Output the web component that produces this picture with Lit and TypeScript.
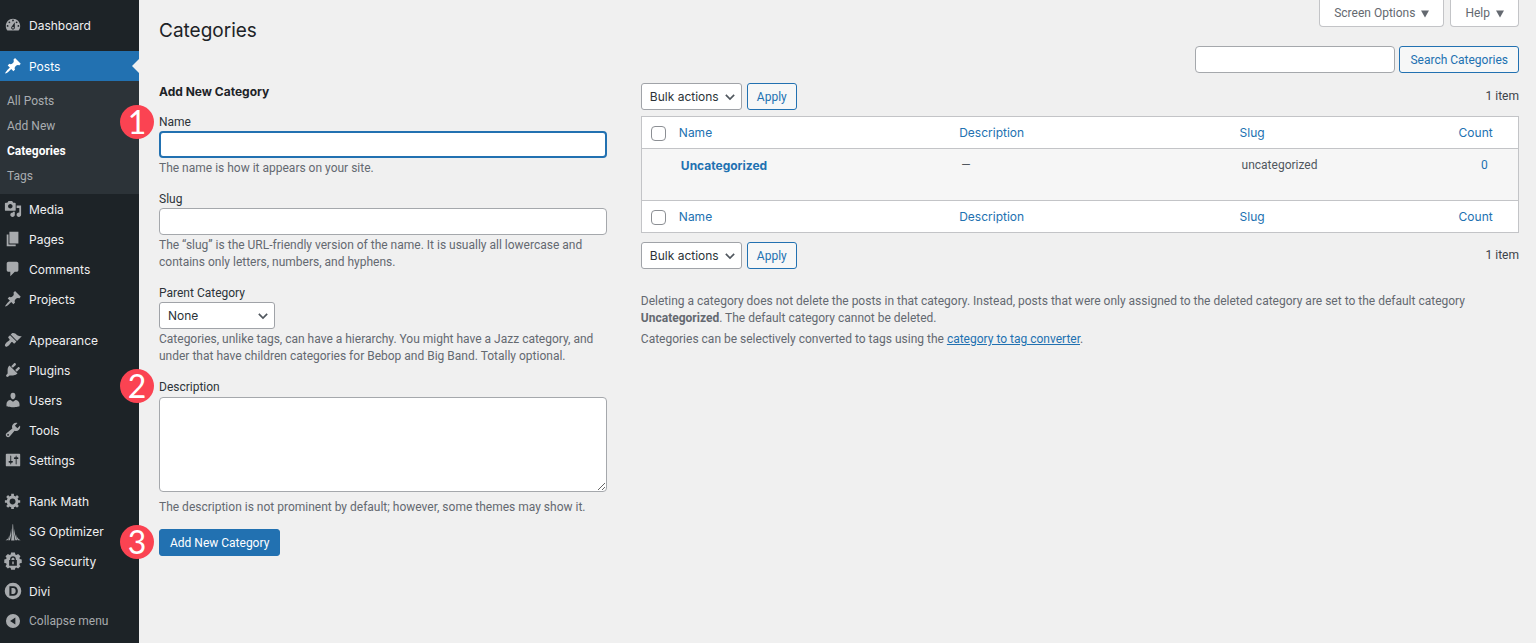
import { LitElement, html, svg, css, nothing, type TemplateResult } from "lit";
import { customElement, property } from "lit/decorators.js";
import { classMap } from "lit/directives/class-map.js";

const pin = svg`<path d="M10.44 3.02l1.82-1.82 6.36 6.35-1.83 1.82c-1.05-.68-2.48-.57-3.41.36l-.75.75c-.92.93-1.04 2.35-.35 3.41l-1.83 1.82-2.41-2.41-2.8 2.79c-.42.42-3.38 2.71-3.8 2.29s1.86-3.39 2.28-3.81l2.79-2.79L4.1 9.36l1.83-1.82c1.05.69 2.48.57 3.4-.36l.75-.75c.93-.92 1.05-2.35.36-3.41z"/>`;

const icons: Record<string, TemplateResult> = {
  dashboard: svg`<path fill-rule="evenodd" d="M3.76 16h12.48c1.1-1.37 1.76-3.11 1.76-5 0-4.42-3.58-8-8-8s-8 3.58-8 8c0 1.89.66 3.63 1.76 5zM10 4c.55 0 1 .45 1 1s-.45 1-1 1-1-.45-1-1 .45-1 1-1zM6 6c.55 0 1 .45 1 1s-.45 1-1 1-1-.45-1-1 .45-1 1-1zm8 0c.55 0 1 .45 1 1s-.45 1-1 1-1-.45-1-1 .45-1 1-1zm-5.37 5.55L12 7v6c0 1.1-.9 2-2 2s-2-.9-2-2c0-.57.24-1.08.63-1.45zM4 10c.55 0 1 .45 1 1s-.45 1-1 1-1-.45-1-1 .45-1 1-1zm12 0c.55 0 1 .45 1 1s-.45 1-1 1-1-.45-1-1 .45-1 1-1zm-5 3c0-.55-.45-1-1-1s-1 .45-1 1 .45 1 1 1 1-.45 1-1z"/>`,
  pin,
  media: svg`<path fill-rule="evenodd" d="M13 11V4c0-.55-.45-1-1-1h-1.67L9 1H5L3.67 3H2c-.55 0-1 .45-1 1v7c0 .55.45 1 1 1h10c.55 0 1-.45 1-1zM7 4.5c1.38 0 2.5 1.12 2.5 2.5S8.38 9.5 7 9.5 4.5 8.38 4.5 7 5.62 4.5 7 4.5zM14 6h5v10.5c0 1.38-1.12 2.5-2.5 2.5S14 17.88 14 16.5s1.12-2.5 2.5-2.5c.17 0 .34.02.5.05V9h-3V6zm-4 8.05V13h2v3.5c0 1.38-1.12 2.5-2.5 2.5S7 17.88 7 16.5 8.12 14 9.5 14c.17 0 .34.02.5.05z"/>`,
  pages: svg`<path d="M6 15V2h10v13H6zm-1 1h8v2H3V5h2v11z"/>`,
  comments: svg`<path d="M5 2h9c1.1 0 2 .9 2 2v7c0 1.1-.9 2-2 2h-2l-5 5v-5H5c-1.1 0-2-.9-2-2V4c0-1.1.9-2 2-2z"/>`,
  appearance: svg`<path d="M14.48 11.06L7.41 3.99l1.5-1.5c.5-.56 2.3-.47 3.51.32 1.21.8 1.43 1.28 2.91 2.1 1.18.64 2.45 1.26 4.45.85zm-.71.71L6.7 4.7 4.93 6.47c-.39.39-.39 1.02 0 1.41l1.06 1.06c.39.39.39 1.03 0 1.42-.6.6-1.43 1.11-2.21 1.69-.35.26-.7.53-1.01.84C1.43 14.23.4 16.08 1.4 17.07c.99 1 2.84-.03 4.18-1.36.31-.31.58-.66.85-1.02.57-.78 1.08-1.61 1.69-2.21.39-.39 1.02-.39 1.41 0l1.06 1.06c.39.39 1.02.39 1.41 0z"/>`,
  plugins: svg`<path d="M13.11 4.36L9.87 7.6 8 5.73l3.24-3.24c.35-.34 1.05-.2 1.56.32.52.51.66 1.21.31 1.55zm-8 1.77l.91-1.12 9.01 9.01-1.19.84c-.71.71-2.63 1.16-3.82 1.16H6.14L4.9 17.26c-.59.59-1.54.59-2.12 0-.59-.58-.59-1.53 0-2.12l1.24-1.24v-3.88c0-1.13.4-3.19 1.09-3.89zm7.26 3.97l3.24-3.24c.34-.35 1.04-.21 1.55.31.52.51.66 1.21.31 1.55l-3.24 3.25z"/>`,
  users: svg`<path d="M10 9.25c-2.27 0-2.73-3.44-2.73-3.44C7 4.02 7.82 2 9.97 2c2.16 0 2.98 2.02 2.71 3.81 0 0-.41 3.44-2.68 3.44zm0 2.57L12.72 10c2.39 0 4.52 2.33 4.52 4.53v2.49s-3.65 1.13-7.24 1.13c-3.65 0-7.24-1.13-7.24-1.13v-2.49c0-2.25 1.94-4.48 4.47-4.48z"/>`,
  tools: svg`<path fill-rule="evenodd" d="M16.68 9.77c-1.34 1.34-3.3 1.67-4.95.99l-5.41 6.52c-.99.99-2.59.99-3.58 0s-.99-2.59 0-3.57l6.52-5.42c-.68-1.65-.35-3.61.99-4.95 1.28-1.28 3.12-1.62 4.72-1.06l-2.89 2.89 2.82 2.82 2.86-2.87c.53 1.58.18 3.39-1.08 4.65zM3.81 16.21c.4.39 1.04.39 1.43 0 .4-.4.4-1.04 0-1.43-.39-.4-1.03-.4-1.43 0-.39.39-.39 1.03 0 1.43z"/>`,
  settings: svg`<path fill-rule="evenodd" d="M18 16V4c0-.55-.45-1-1-1H3c-.55 0-1 .45-1 1v12c0 .55.45 1 1 1h14c.55 0 1-.45 1-1zM8 11h1c.55 0 1 .45 1 1s-.45 1-1 1H8v1.5c0 .28-.22.5-.5.5s-.5-.22-.5-.5V13H6c-.55 0-1-.45-1-1s.45-1 1-1h1V5.5c0-.28.22-.5.5-.5s.5.22.5.5V11zm5-2h-1c-.55 0-1-.45-1-1s.45-1 1-1h1V5.500c0-.28.22-.5.5-.5s.5.22.5.5V7h1c.55 0 1 .45 1 1s-.45 1-1 1h-1v5.500c0 .28-.22.5-.5.5s-.5-.22-.5-.5V9z"/>`,
  gear: svg`<path fill-rule="evenodd" d="M18 12h-2.18c-.17.7-.44 1.35-.81 1.93l1.54 1.54-2.1 2.1-1.54-1.54c-.58.36-1.23.63-1.91.79V19H8v-2.18c-.68-.16-1.33-.43-1.91-.79l-1.54 1.54-2.12-2.12 1.54-1.54c-.36-.58-.63-1.23-.79-1.91H1V9.03h2.17c.16-.7.44-1.35.8-1.94L2.43 5.55l2.1-2.1 1.54 1.54c.58-.37 1.24-.64 1.93-.81V2h3v2.18c.68.16 1.33.43 1.91.79l1.54-1.54 2.12 2.12-1.54 1.54c.36.59.64 1.24.8 1.94H18V12zm-8.5 1.8c1.82 0 3.3-1.48 3.3-3.3s-1.48-3.3-3.3-3.3-3.3 1.48-3.3 3.3 1.48 3.3 3.3 3.3z"/>`,
  optimizer: svg`<path d="M9.500 2.500h.6l.7 11 .9 7H7.900l.9-7zM8 7l.2 6.500-1.600 6.800H4.600C6.500 17 7.500 12 8 7zM11.200 7.500l1.200 6.500 2.400 6.300h-2.200l-1.400-6.300zM6 13.500c-.3 3.200-1.400 5.500-4.300 6.900h2.200c1.300-1.700 2-3.900 2.100-6.900zM13.600 13.500c.7 3 2 5.500 4.900 6.900h-2.900c-1.400-1.700-1.900-4-2-6.900z"/>`,
  security: svg`<path fill-rule="evenodd" d="M7.900.6h4.200l.5 2.200 1.100.5 2-1.200 2.600 2.600-1.200 2 .5 1.100 2.100.5v3.800l-2.100.5-.5 1.200 1.200 2-2.600 2.600-2-1.200-1.100.5-.5 2.100H7.900l-.5-2.100-1.200-.5-1.900 1.200-2.600-2.600 1.200-2-.5-1.200L.3 12.100V8.300l2.100-.5.500-1.100-1.200-2 2.600-2.600 2 1.200 1.100-.5zM6.800 9H5.700v6.200h8.600V9h-1.100V8c0-1.800-1.400-3.200-3.200-3.200S6.800 6.200 6.800 8zm1.500 0V8c0-1 .7-1.700 1.700-1.700s1.700.7 1.700 1.700v1zM9.200 10.500h1.600v3.200H9.200z"/>`,
  divi: svg`<path fill-rule="evenodd" d="M10 .8a9.200 9.200 0 1 0 0 18.400A9.200 9.200 0 0 0 10 .8zM6 4.600h4.200c3.200 0 5.200 2.200 5.200 5.400s-2 5.400-5.200 5.400H6zm2.300 2.100v6.600h1.800c1.800 0 2.900-1.200 2.900-3.300s-1.100-3.300-2.900-3.300z"/>`,
  collapse: svg`<path fill-rule="evenodd" d="M10 2.200a7.800 7.800 0 1 0 0 15.600 7.800 7.800 0 0 0 0-15.600zM12.600 6v8L6.800 10z"/>`,
};

interface MenuEntry {
  label: string;
  icon: string;
  current?: boolean;
  children?: string[];
}

const menuGroups: MenuEntry[][] = [
  [{ label: "Dashboard", icon: "dashboard" }],
  [
    { label: "Posts", icon: "pin", current: true, children: ["All Posts", "Add New", "Categories", "Tags"] },
    { label: "Media", icon: "media" },
    { label: "Pages", icon: "pages" },
    { label: "Comments", icon: "comments" },
    { label: "Projects", icon: "pin" },
  ],
  [
    { label: "Appearance", icon: "appearance" },
    { label: "Plugins", icon: "plugins" },
    { label: "Users", icon: "users" },
    { label: "Tools", icon: "tools" },
    { label: "Settings", icon: "settings" },
  ],
  [
    { label: "Rank Math", icon: "gear" },
    { label: "SG Optimizer", icon: "optimizer" },
    { label: "SG Security", icon: "security" },
    { label: "Divi", icon: "divi" },
  ],
];

const glyph = (name: string) =>
  html`<svg class="icon" viewBox="0 0 20 20" aria-hidden="true">${icons[name]}</svg>`;

@customElement("admin-menu")
export class AdminMenu extends LitElement {
  static styles = css`
    :host {
      display: block;
      background: #1d2327;
      color: #f0f0f1;
      font-size: 12px;
    }
    .menu {
      display: flex;
      flex-direction: column;
      gap: 11px;
      padding-top: 10px;
    }
    ul {
      list-style: none;
      margin: 0;
      padding: 0;
    }
    .item {
      display: flex;
      align-items: center;
      gap: 7px;
      width: 100%;
      height: 30px;
      padding: 0 0 0 4px;
      border: 0;
      background: none;
      color: inherit;
      font: 12px/17px Inter, "Liberation Sans", sans-serif;
      text-align: left;
      text-decoration: none;
      position: relative;
      box-sizing: border-box;
      cursor: pointer;
    }
    .icon {
      width: 18px;
      height: 18px;
      fill: #a7aaad;
      overflow: visible;
    }
    .current {
      background: #2271b1;
      color: #fff;
    }
    .current .icon {
      fill: #fff;
    }
    .current::after {
      content: "";
      position: absolute;
      right: 0;
      top: 8px;
      border: 7px solid transparent;
      border-left-width: 0;
      border-right-color: #f0f0f0;
    }
    .submenu {
      background: #2c3338;
      padding: 8px 0 5px;
    }
    .sub {
      display: block;
      padding-left: 7px;
      line-height: 25px;
      color: #a9adb1;
      text-decoration: none;
    }
    .sub.active {
      color: #fff;
      font-weight: 700;
    }
    .collapse {
      color: #a7aaad;
      font-family: Roboto, "Liberation Sans", sans-serif;
    }
  `;

  render() {
    return html`<nav class="menu" aria-label="Main menu">
      ${menuGroups.map(
        (group, g) => html`<ul>
          ${group.map(
            (entry) => html`<li>
              <a class=${classMap({ item: true, current: !!entry.current })} href="#">
                ${glyph(entry.icon)}<span>${entry.label}</span>
              </a>
              ${entry.children
                ? html`<ul class="submenu">
                    ${entry.children.map(
                      (c) => html`<li><a class=${classMap({ sub: true, active: c === "Categories" })} href="#">${c}</a></li>`
                    )}
                  </ul>`
                : nothing}
            </li>`
          )}
          ${g === menuGroups.length - 1
            ? html`<li><button class="item collapse" type="button">${glyph("collapse")}<span>Collapse menu</span></button></li>`
            : nothing}
        </ul>`
      )}
    </nav>`;
  }
}

const controls = css`
  * {
    box-sizing: border-box;
  }
  h1,
  h2,
  p {
    margin: 0;
  }
  a {
    color: #2271b1;
    text-decoration: none;
  }
  .text {
    display: block;
    height: 27px;
    border: 1px solid #a5a8ac;
    border-radius: 4px;
    background: #fff;
    padding: 0 8px;
    font: inherit;
    color: #2c3338;
    outline: 0;
  }
  .button {
    height: 27px;
    padding: 2px 10px 0;
    border: 1px solid #2271b1;
    border-radius: 3px;
    background: #f6f7f7;
    color: #2271b1;
    font: inherit;
    cursor: pointer;
    white-space: nowrap;
  }
  .compact {
    padding: 2px 9px 0;
  }
  .primary {
    background: #2271b1;
    color: #fff;
  }
  .picker {
    position: relative;
    display: flex;
  }
  .picker select {
    appearance: none;
    width: 100%;
    height: 27px;
    padding: 0 22px 0 8px;
    border: 1px solid #a0a3a8;
    border-radius: 3px;
    background: #fff;
    color: #2c3338;
    font: 12px/17px Inter, "Liberation Sans", sans-serif;
  }
  .picker svg {
    position: absolute;
    right: 7px;
    top: 9px;
    width: 10px;
    height: 10px;
    fill: none;
    stroke: #50575e;
    stroke-width: 2;
    pointer-events: none;
  }
`;

const chevron = html`<svg viewBox="0 0 12 12" aria-hidden="true"><path d="M1 3.500l5 5 5-5" /></svg>`;

@customElement("category-form")
export class CategoryForm extends LitElement {
  static styles = [
    controls,
    css`
      :host {
        display: block;
        padding-top: 10px;
      }
      h2 {
        font: 700 12px/18px Inter, "Liberation Sans", sans-serif;
        color: #1d2327;
        margin-bottom: 13px;
      }
      form {
        display: flex;
        flex-direction: column;
        align-items: stretch;
        gap: 13px;
      }
      .field {
        position: relative;
      }
      label {
        display: block;
        line-height: 17px;
        color: #2c3338;
      }
      .text {
        width: 100%;
      }
      .focused {
        border: 2px solid #2271b1;
      }
      .help {
        margin-top: 2px;
        line-height: 17px;
        color: #646970;
      }
      .parent {
        width: 116px;
      }
      .area {
        height: 95px;
        resize: vertical;
      }
      .field > .area {
        margin-top: 1px;
      }
      .area + .help {
        margin-top: 7px;
      }
      .field + .field:not(.submit) {
        padding-top: 1px;
      }
      .badge {
        position: absolute;
        left: -39px;
        top: -9px;
        width: 34px;
        height: 34px;
        border-radius: 50%;
        background: #fb4352;
        color: #fff;
        font: 32px/34px Lato, sans-serif;
        text-align: center;
      }
      .submit .badge {
        top: -4px;
      }
    `,
  ];

  render() {
    return html`
      <h2>Add New Category</h2>
      <form @submit=${(e: Event) => e.preventDefault()}>
        <div class="field">
          <span class="badge">1</span>
          <label for="name">Name</label>
          <input id="name" class="text focused" type="text" />
          <p class="help">The name is how it appears on your site.</p>
        </div>
        <div class="field">
          <label for="slug">Slug</label>
          <input id="slug" class="text" type="text" />
          <p class="help">
            The “slug” is the URL-friendly version of the name. It is usually all lowercase and contains only letters,
            numbers, and hyphens.
          </p>
        </div>
        <div class="field">
          <label for="parent">Parent Category</label>
          <div class="picker parent">
            <select id="parent"><option>None</option></select>${chevron}
          </div>
          <p class="help">
            Categories, unlike tags, can have a hierarchy. You might have a Jazz category, and under that have children
            categories for Bebop and Big Band. Totally optional.
          </p>
        </div>
        <div class="field">
          <span class="badge">2</span>
          <label for="description">Description</label>
          <textarea id="description" class="text area"></textarea>
          <p class="help">The description is not prominent by default; however, some themes may show it.</p>
        </div>
        <div class="field submit">
          <span class="badge">3</span>
          <button class="button primary" type="submit">Add New Category</button>
        </div>
      </form>
    `;
  }
}

@customElement("bulk-bar")
export class BulkBar extends LitElement {
  @property() name = "bulk";

  static styles = [
    controls,
    css`
      :host {
        display: flex;
        align-items: center;
        gap: 5px;
      }
      .count {
        margin-left: auto;
        color: #3c434a;
      }
    `,
  ];

  render() {
    return html`
      <div class="picker">
        <select id=${this.name} aria-label="Select bulk action"><option>Bulk actions</option></select>${chevron}
      </div>
      <button class="button compact" type="button">Apply</button>
      <span class="count">1 item</span>
    `;
  }
}

@customElement("category-list")
export class CategoryList extends LitElement {
  static styles = [
    controls,
    css`
      :host {
        display: block;
        padding-top: 10px;
      }
      table {
        width: 100%;
        margin: 6px 0 9px;
        table-layout: fixed;
        border: 1px solid #c3c4c7;
        border-spacing: 0;
        background: #fff;
      }
      .c-check {
        width: 29px;
      }
      .c-wide {
        width: 32%;
      }
      .c-slug {
        width: 25%;
      }
      th,
      td {
        text-align: left;
        font-weight: 400;
        padding: 0 8px;
      }
      th {
        height: 31px;
        font-family: Inter, "Liberation Sans", sans-serif;
      }
      tbody td,
      tbody th {
        height: 53px;
        padding: 8px 10px;
        vertical-align: top;
        line-height: 17px;
        background: #f6f6f6;
        border: solid #c3c4c7;
        border-width: 1px 0;
        color: #50575e;
      }
      .row-title {
        font-weight: 700;
      }
      tbody .num {
        text-align: center;
      }
      .pick {
        padding: 1px 0 0 9px;
      }
      .pick input {
        display: block;
        appearance: none;
        width: 15px;
        height: 15px;
        margin: 0;
        border: 1px solid #8c8f94;
        border-radius: 4px;
        background: #fff;
      }
      .notes {
        margin-top: 24px;
        display: flex;
        flex-direction: column;
        gap: 4px;
        line-height: 17px;
        color: #646970;
      }
      .notes b {
        font-weight: 700;
      }
      .notes a {
        text-decoration: underline;
      }
    `,
  ];

  private headings(place: string) {
    return html`<tr>
      <td class="pick"><input type="checkbox" aria-label=${`Select all, ${place}`} /></td>
      ${["Name", "Description", "Slug", "Count"].map((t) => html`<th scope="col"><a href="#">${t}</a></th>`)}
    </tr>`;
  }

  render() {
    return html`
      <bulk-bar name="bulk-top"></bulk-bar>
      <table>
        <colgroup>
          <col class="c-check" />
          <col class="c-wide" />
          <col class="c-wide" />
          <col class="c-slug" />
          <col />
        </colgroup>
        <thead>
          ${this.headings("top")}
        </thead>
        <tbody>
          <tr>
            <td></td>
            <th scope="row"><a class="row-title" href="#">Uncategorized</a></th>
            <td>—</td>
            <td>uncategorized</td>
            <td class="num"><a href="#">0</a></td>
          </tr>
        </tbody>
        <tfoot>
          ${this.headings("bottom")}
        </tfoot>
      </table>
      <bulk-bar name="bulk-bottom"></bulk-bar>
      <div class="notes">
        <p>
          Deleting a category does not delete the posts in that category. Instead, posts that were only assigned to the
          deleted category are set to the default category <b>Uncategorized</b>. The default category cannot be deleted.
        </p>
        <p>Categories can be selectively converted to tags using the <a href="#">category to tag converter</a>.</p>
      </div>
    `;
  }
}

@customElement("app-root")
export class AppRoot extends LitElement {
  static styles = [
    controls,
    css`
      :host {
        display: grid;
        grid-template-columns: 139px minmax(0, 1fr);
        min-height: 100vh;
        background: #f0f0f0;
        color: #3c434a;
        font: 12px/17px Roboto, "Liberation Sans", sans-serif;
      }
      main {
        padding: 0 17px 0 20px;
      }
      .top {
        display: flex;
        justify-content: space-between;
        align-items: flex-start;
        height: 46px;
      }
      h1 {
        font: 400 19px/30px Inter, "Liberation Sans", sans-serif;
        color: #1d2327;
        padding-top: 16px;
      }
      .tabs {
        display: flex;
        gap: 6px;
      }
      .tab {
        height: 27px;
        padding: 1px 14px 0;
        border: 1px solid #c3c4c7;
        border-top: 0;
        border-radius: 0 0 4px 4px;
        background: #fff;
        color: #646970;
        font: inherit;
        display: flex;
        align-items: center;
        gap: 6px;
      }
      .tab svg {
        width: 8px;
        height: 8px;
        fill: #646970;
      }
      .search {
        display: flex;
        justify-content: flex-end;
        gap: 4px;
      }
      .search .text {
        width: 200px;
      }
      .columns {
        display: grid;
        grid-template-columns: minmax(0, 51fr) minmax(0, 100fr);
        gap: 34px;
      }
    `,
  ];

  private tab(label: string) {
    return html`<button class="tab" type="button">
      ${label}<svg viewBox="0 0 8 8" aria-hidden="true"><path d="M0 .5h8L4 7.500z" /></svg>
    </button>`;
  }

  render() {
    return html`
      <admin-menu></admin-menu>
      <main>
        <header class="top">
          <h1>Categories</h1>
          <div class="tabs">${this.tab("Screen Options")}${this.tab("Help")}</div>
        </header>
        <form class="search" role="search" @submit=${(e: Event) => e.preventDefault()}>
          <input class="text" type="search" aria-label="Search Categories" />
          <button class="button" type="submit">Search Categories</button>
        </form>
        <div class="columns">
          <category-form></category-form>
          <category-list></category-list>
        </div>
      </main>
    `;
  }
}
